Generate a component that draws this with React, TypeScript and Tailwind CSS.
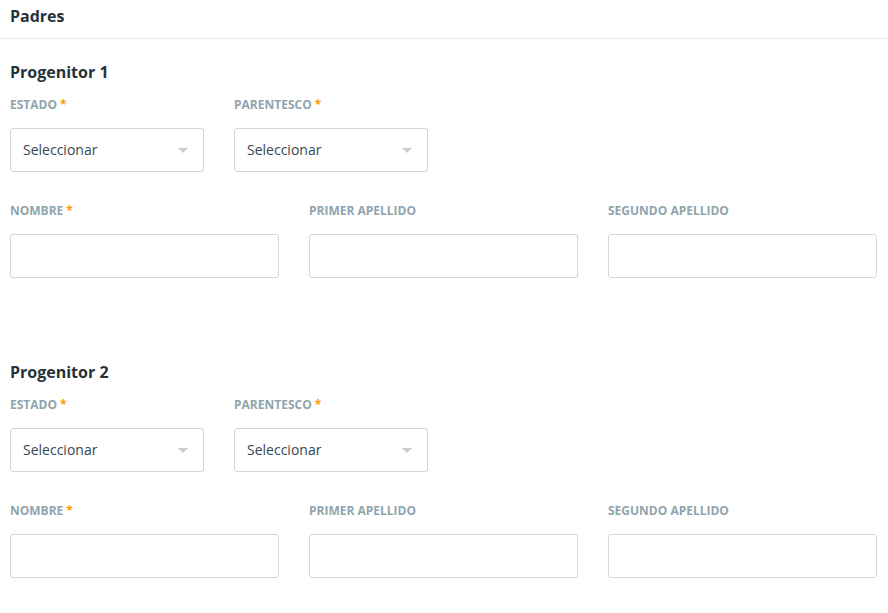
import React from 'react';

function Label({ text, required }: { text: string; required?: boolean }) {
  return (
    <div className="h-4 flex items-center text-[12px] font-bold uppercase text-[#90a4ae] leading-4">
      {text}
      {required && <span className="ml-[3px] text-[#ff9800]">*</span>}
    </div>
  );
}

function SelectBox() {
  return (
    <div className="mt-[15px] h-11 w-[194px] flex items-center justify-between rounded-[3px] border border-[#cfd8dc] bg-white pl-3 pr-[15px]">
      <span className="text-[14px] leading-5 text-[#37474f] -mt-px">Seleccionar</span>
      <svg width="10" height="5" viewBox="0 0 10 5">
        <path d="M0 0 L10 0 L5 5 Z" fill="#c5ced3" />
      </svg>
    </div>
  );
}

function TextBox() {
  return <div className="mt-[15px] h-11 w-full rounded-[3px] border border-[#cfd8dc] bg-white" />;
}

function Progenitor({ n, last }: { n: number; last?: boolean }) {
  return (
    <section className={last ? 'pl-[10px] pr-[11px]' : 'pl-[10px] pr-[11px] pb-[82px]'}>
      <h2 className="h-6 text-[16px] font-bold leading-6 text-[#263238]">Progenitor {n}</h2>
      <div className="mt-[13px] flex gap-[30px]">
        <div>
          <Label text="Estado" required />
          <SelectBox />
        </div>
        <div>
          <Label text="Parentesco" required />
          <SelectBox />
        </div>
      </div>
      <div className="mt-[31px] grid grid-cols-3 gap-x-[30px]">
        <div>
          <Label text="Nombre" required />
          <TextBox />
        </div>
        <div>
          <Label text="Primer apellido" />
          <TextBox />
        </div>
        <div>
          <Label text="Segundo apellido" />
          <TextBox />
        </div>
      </div>
    </section>
  );
}

export default function App() {
  return (
    <div className="min-h-screen w-full bg-white font-['Open_Sans',sans-serif]">
      <header className="h-[39px] flex items-center border-b border-[#e6e9eb] pl-[10px] pb-[6px]">
        <h1 className="text-[16px] font-bold text-[#263238]">Padres</h1>
      </header>
      <div className="pt-[21px]">
        <Progenitor n={1} />
        <Progenitor n={2} last />
      </div>
    </div>
  );
}
